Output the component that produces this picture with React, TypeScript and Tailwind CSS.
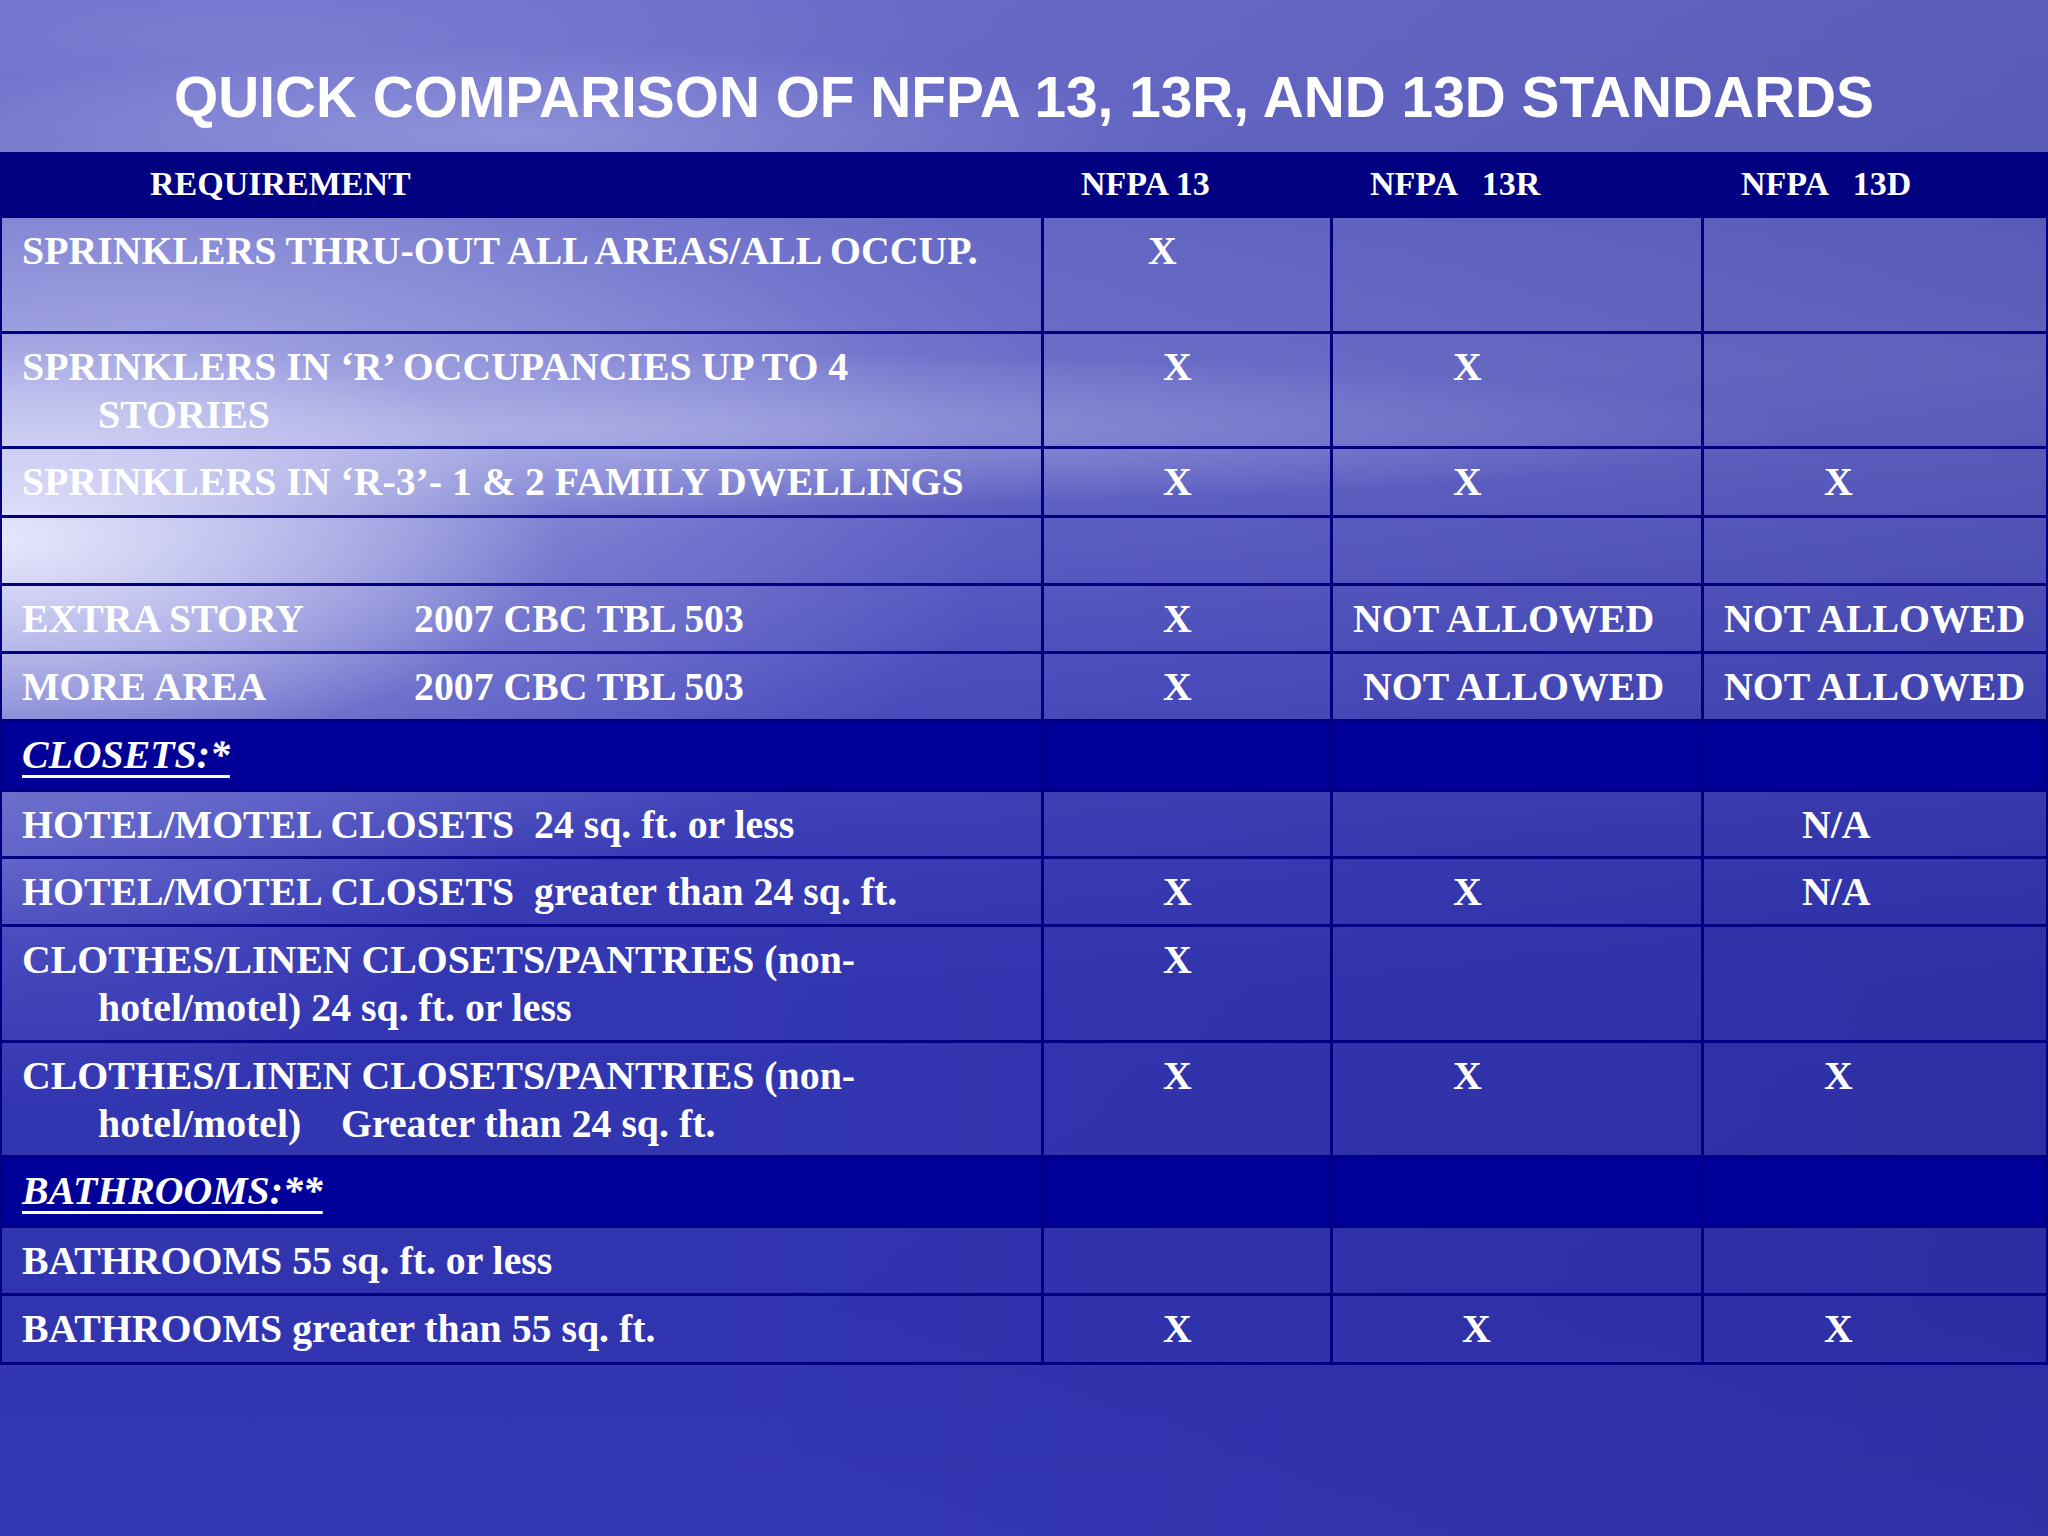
import React from "react";

type Cell = { t?: React.ReactNode; c?: string };

const X = "X";
const NA = "NOT ALLOWED";

function Row({
  h,
  first,
  cells,
  dark,
  last,
}: {
  h: string;
  first: React.ReactNode;
  cells: Cell[];
  dark?: boolean;
  last?: boolean;
}) {
  return (
    <div
      className={`grid grid-cols-[1039px_289px_371px_345px] ${h} border-t-[3px] border-[#000080] ${
        dark ? "bg-[#000099]" : ""
      } ${last ? "border-b-[3px]" : ""}`}
    >
      <div className="pl-[20px] pr-[8px] pt-[9px] leading-[48px]">{first}</div>
      {cells.map((c, i) => (
        <div
          key={i}
          className={`border-l-[3px] border-[#000080] pt-[9px] leading-[48px] whitespace-nowrap ${c.c ?? ""}`}
        >
          {c.t}
        </div>
      ))}
    </div>
  );
}

export default function App() {
  return (
    <div className="w-[2048px] h-[1536px] overflow-hidden text-white bg-[radial-gradient(ellipse_560px_220px_at_0px_540px,rgba(236,236,255,0.92),rgba(236,236,255,0)),radial-gradient(ellipse_1300px_80px_at_500px_430px,rgba(200,202,240,0.55),rgba(200,202,240,0)),radial-gradient(ellipse_900px_260px_at_150px_330px,rgba(185,187,235,0.45),rgba(185,187,235,0)),radial-gradient(ellipse_1000px_400px_at_0px_540px,rgba(185,187,235,0.7),rgba(185,187,235,0)),radial-gradient(ellipse_650px_90px_at_520px_135px,rgba(170,172,230,0.55),rgba(170,172,230,0)),radial-gradient(ellipse_700px_120px_at_250px_40px,rgba(150,152,225,0.4),rgba(150,152,225,0)),radial-gradient(ellipse_500px_250px_at_0px_860px,rgba(110,112,210,0.5),rgba(110,112,210,0)),linear-gradient(90deg,rgba(0,0,0,0)_35%,rgba(20,20,110,0.18)_100%),linear-gradient(180deg,#6a6dc8_0%,#6568c6_12%,#6f72cc_24%,#5b5ec4_36%,#4a4dbd_46%,#3b3eb6_54%,#3336b1_64%,#3134af_85%,#3437b3_100%)]">
      <div className="h-[152px] pt-[70px] text-center text-[56.8px] leading-none font-bold font-['Liberation_Sans',Arial,sans-serif]">
        QUICK COMPARISON OF NFPA 13, 13R, AND 13D STANDARDS
      </div>

      <div className="font-['Liberation_Serif','Times_New_Roman',serif] font-bold">
        <div className="h-[63px] bg-[#000080] flex items-center text-[34px] whitespace-pre">
          <div className="w-[1044px] pl-[150px]">REQUIREMENT</div>
          <div className="w-[289px] pl-[37px]">NFPA 13</div>
          <div className="w-[371px] pl-[37px]">NFPA   13R</div>
          <div className="w-[344px] pl-[37px]">NFPA   13D</div>
        </div>

        <div className="border-l-[2px] border-r-[2px] border-[#000080] text-[39.8px]">
          <Row
            h="h-[116px]"
            first="SPRINKLERS THRU-OUT ALL AREAS/ALL OCCUP."
            cells={[{ t: X, c: "pl-[104px]" }, {}, {}]}
          />
          <Row
            h="h-[115px]"
            first={
              <div className="pl-[76px] indent-[-76px]">
                SPRINKLERS IN ‘R’ OCCUPANCIES UP TO 4
                <br />
                STORIES
              </div>
            }
            cells={[{ t: X, c: "pl-[119px]" }, { t: X, c: "pl-[120px]" }, {}]}
          />
          <Row
            h="h-[69px]"
            first="SPRINKLERS IN ‘R-3’- 1 & 2 FAMILY DWELLINGS"
            cells={[
              { t: X, c: "pl-[119px]" },
              { t: X, c: "pl-[120px]" },
              { t: X, c: "pl-[120px]" },
            ]}
          />
          <Row h="h-[68px]" first="" cells={[{}, {}, {}]} />
          <Row
            h="h-[68px]"
            first={
              <>
                <span className="inline-block w-[392px]">EXTRA STORY</span>2007 CBC TBL 503
              </>
            }
            cells={[
              { t: X, c: "pl-[119px]" },
              { t: NA, c: "pl-[20px]" },
              { t: NA, c: "pl-[20px]" },
            ]}
          />
          <Row
            h="h-[68px]"
            first={
              <>
                <span className="inline-block w-[392px]">MORE AREA</span>2007 CBC TBL 503
              </>
            }
            cells={[
              { t: X, c: "pl-[119px]" },
              { t: NA, c: "pl-[30px]" },
              { t: NA, c: "pl-[20px]" },
            ]}
          />
          <Row
            h="h-[70px]"
            dark
            first={
              <span className="italic underline decoration-[3px] underline-offset-[7px]">CLOSETS:*</span>
            }
            cells={[{}, {}, {}]}
          />
          <Row
            h="h-[67px]"
            first={
              <>
                <span className="inline-block w-[512px]">HOTEL/MOTEL CLOSETS</span>24 sq. ft. or less
              </>
            }
            cells={[{}, {}, { t: "N/A", c: "pl-[98px]" }]}
          />
          <Row
            h="h-[68px]"
            first={
              <>
                <span className="inline-block w-[512px]">HOTEL/MOTEL CLOSETS</span>greater than 24 sq. ft.
              </>
            }
            cells={[
              { t: X, c: "pl-[119px]" },
              { t: X, c: "pl-[120px]" },
              { t: "N/A", c: "pl-[98px]" },
            ]}
          />
          <Row
            h="h-[116px]"
            first={
              <div className="pl-[76px] indent-[-76px]">
                CLOTHES/LINEN CLOSETS/PANTRIES (non-
                <br />
                hotel/motel) 24 sq. ft. or less
              </div>
            }
            cells={[{ t: X, c: "pl-[119px]" }, {}, {}]}
          />
          <Row
            h="h-[115px]"
            first={
              <div className="pl-[76px] indent-[-76px]">
                CLOTHES/LINEN CLOSETS/PANTRIES (non-
                <br />
                <span className="inline-block w-[243px] indent-0">hotel/motel)</span>Greater than 24 sq. ft.
              </div>
            }
            cells={[
              { t: X, c: "pl-[119px]" },
              { t: X, c: "pl-[120px]" },
              { t: X, c: "pl-[120px]" },
            ]}
          />
          <Row
            h="h-[70px]"
            dark
            first={
              <span className="italic underline decoration-[3px] underline-offset-[7px]">BATHROOMS:**</span>
            }
            cells={[{}, {}, {}]}
          />
          <Row h="h-[68px]" first="BATHROOMS 55 sq. ft. or less" cells={[{}, {}, {}]} />
          <Row
            h="h-[72px]"
            last
            first="BATHROOMS greater than 55 sq. ft."
            cells={[
              { t: X, c: "pl-[119px]" },
              { t: X, c: "pl-[129px]" },
              { t: X, c: "pl-[120px]" },
            ]}
          />
        </div>
      </div>
    </div>
  );
}
